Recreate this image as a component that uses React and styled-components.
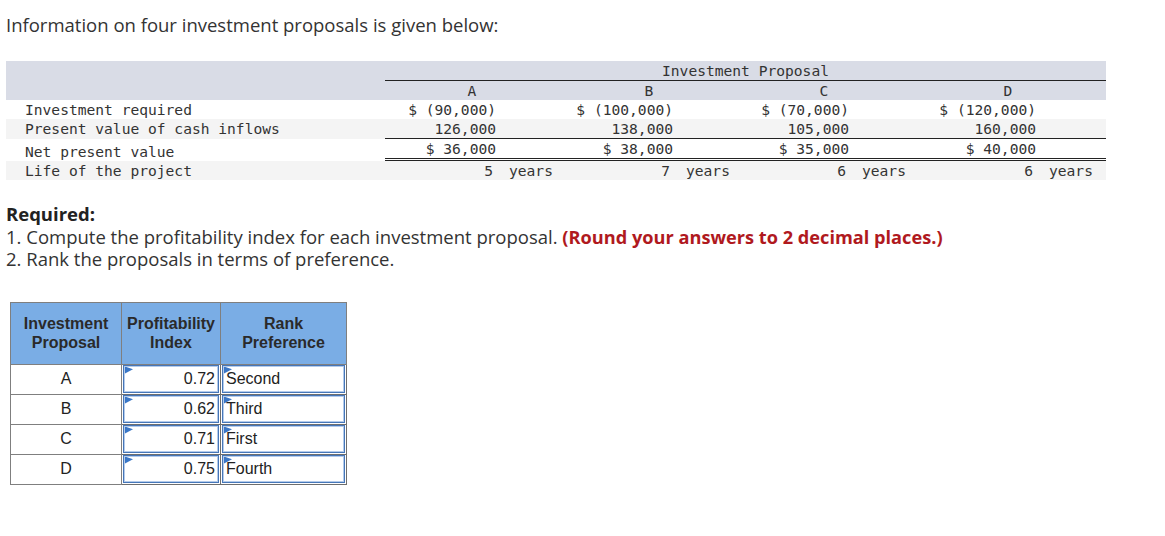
import React from "react";
import styled, { createGlobalStyle } from "styled-components";

const GlobalStyle = createGlobalStyle`
  html, body { margin: 0; padding: 0; background: #fff; }
  body { font-family: "Open Sans", sans-serif; color: #333; }
`;

const Page = styled.div`
  padding: 13px 6px 0 6px;
  width: 1159px;
  box-sizing: border-box;
`;

const Intro = styled.p`
  margin: 0;
  font-family: "Open Sans", sans-serif;
  font-size: 18.5px;
  line-height: 24px;
  color: #333;
`;

const VALUE_COLS = "115px 60px 117px 60px 116px 59px 128px 66px";

const DataTable = styled.div`
  margin-top: 24px;
  width: 1100px;
  font-family: "DejaVu Sans Mono", monospace;
  font-size: 14.6px;
  color: #333;
`;

const Row = styled.div`
  display: grid;
  grid-template-columns: 379px 1fr;
  background: ${(p) => p.$bg || "#fff"};
`;

const Label = styled.div`
  padding-left: 19px;
  line-height: 19px;
  white-space: pre;
  align-self: ${(p) => (p.$bottom ? "end" : "start")};
`;

const Values = styled.div`
  display: grid;
  grid-template-columns: ${VALUE_COLS};
  border-bottom: ${(p) =>
    p.$rule === "double" ? "3px double #222" : p.$rule === "single" ? "1px solid #222" : "none"};
`;

const Caption = styled.div`
  grid-column: 1 / -1;
  text-align: center;
  line-height: 19px;
`;

const Letter = styled.div`
  grid-column: span 2;
  line-height: 19px;
  display: flex;
`;

const LetterBox = styled.span`
  width: 48px;
  margin-left: ${(p) => p.$offset}px;
  text-align: center;
`;

const Num = styled.div`
  text-align: right;
  padding-right: ${(p) => p.$pr}px;
  line-height: 19px;
  white-space: pre;
`;

const Unit = styled.div`
  padding-left: 9px;
  line-height: 19px;
`;

const Required = styled.div`
  margin-top: 23px;
  font-family: "Open Sans", sans-serif;
  font-size: 18.5px;
  line-height: 22.5px;
  color: #333;
`;

const ReqTitle = styled.div`
  font-weight: 700;
  color: #222;
`;

const ReqLine = styled.div``;

const Note = styled.span`
  color: #b0191e;
  font-weight: 700;
  font-size: 18.2px;
`;

const AnswerTable = styled.table`
  margin: 31px 0 0 4px;
  border-collapse: collapse;
  font-family: "Liberation Sans", Arial, sans-serif;
  font-size: 16px;
  color: #222;
`;

const HeadCell = styled.th`
  width: ${(p) => p.$w}px;
  height: 61px;
  padding: 0;
  background: #7aade5;
  border: 1px solid #7f7f7f;
  font-weight: 700;
  line-height: 19px;
  color: #2a2a2a;
  text-align: center;
  vertical-align: middle;
`;

const BodyCell = styled.td`
  padding: 0;
  border: 1px solid #7f7f7f;
  text-align: center;
  vertical-align: middle;
  background: #fff;
`;

const InputCell = styled.td`
  padding: 0 1px 1px 1px;
  border: 1px solid #6d6d6d;
  background: #fff;
  vertical-align: top;
`;

const InputBox = styled.div`
  position: relative;
  height: 28px;
  box-sizing: border-box;
  border: 1px solid #4676b8;
  box-shadow: inset 0 0 0 1px #b4cbea;
  text-align: ${(p) => p.$align};
  padding: 0 3px;
  line-height: 26px;
  color: #222;
`;

const Flag = styled.span`
  position: absolute;
  left: 1px;
  top: 1px;
  width: 8px;
  height: 7px;
  background: #3a76c6;
  clip-path: polygon(0 0, 100% 40%, 0 100%);
`;

const proposals = [
  { letter: "A", inv: "$ (90,000)", pv: "126,000", npv: "$ 36,000", life: "5", offset: 63 },
  { letter: "B", inv: "$ (100,000)", pv: "138,000", npv: "$ 38,000", life: "7", offset: 65 },
  { letter: "C", inv: "$ (70,000)", pv: "105,000", npv: "$ 35,000", life: "6", offset: 63 },
  { letter: "D", inv: "$ (120,000)", pv: "160,000", npv: "$ 40,000", life: "6", offset: 72 },
];

const answers = [
  { p: "A", pi: "0.72", rank: "Second" },
  { p: "B", pi: "0.62", rank: "Third" },
  { p: "C", pi: "0.71", rank: "First" },
  { p: "D", pi: "0.75", rank: "Fourth" },
];

function ValueRow({ field, unit }) {
  return proposals.map((pr) => (
    <React.Fragment key={pr.letter}>
      <Num $pr={unit ? 7 : 4}>{pr[field]}</Num>
      <Unit>{unit ? "years" : ""}</Unit>
    </React.Fragment>
  ));
}

export default function App() {
  return (
    <>
      <GlobalStyle />
      <Page>
        <Intro>Information on four investment proposals is given below:</Intro>

        <DataTable>
          <Row $bg="#d9dce6">
            <Label />
            <Values $rule="single">
              <Caption>Investment Proposal</Caption>
            </Values>
          </Row>
          <Row $bg="#d9dce6">
            <Label />
            <Values>
              {proposals.map((pr) => (
                <Letter key={pr.letter}>
                  <LetterBox $offset={pr.offset}>{pr.letter}</LetterBox>
                </Letter>
              ))}
            </Values>
          </Row>
          <Row>
            <Label>Investment required</Label>
            <Values>
              <ValueRow field="inv" />
            </Values>
          </Row>
          <Row $bg="#f4f4f4">
            <Label>Present value of cash inflows</Label>
            <Values $rule="single">
              <ValueRow field="pv" />
            </Values>
          </Row>
          <Row>
            <Label $bottom>Net present value</Label>
            <Values $rule="double">
              <ValueRow field="npv" />
            </Values>
          </Row>
          <Row $bg="#f4f4f4">
            <Label>Life of the project</Label>
            <Values>
              <ValueRow field="life" unit />
            </Values>
          </Row>
        </DataTable>

        <Required>
          <ReqTitle>Required:</ReqTitle>
          <ReqLine>
            1. Compute the profitability index for each investment proposal.{" "}
            <Note>(Round your answers to 2 decimal places.)</Note>
          </ReqLine>
          <ReqLine>2. Rank the proposals in terms of preference.</ReqLine>
        </Required>

        <AnswerTable>
          <thead>
            <tr>
              <HeadCell $w={110}>
                Investment
                <br />
                Proposal
              </HeadCell>
              <HeadCell $w={98}>
                Profitability
                <br />
                Index
              </HeadCell>
              <HeadCell $w={125}>
                Rank
                <br />
                Preference
              </HeadCell>
            </tr>
          </thead>
          <tbody>
            {answers.map((a) => (
              <tr key={a.p}>
                <BodyCell>{a.p}</BodyCell>
                <InputCell>
                  <InputBox $align="right">
                    <Flag />
                    {a.pi}
                  </InputBox>
                </InputCell>
                <InputCell>
                  <InputBox $align="left">
                    <Flag />
                    {a.rank}
                  </InputBox>
                </InputCell>
              </tr>
            ))}
          </tbody>
        </AnswerTable>
      </Page>
    </>
  );
}
